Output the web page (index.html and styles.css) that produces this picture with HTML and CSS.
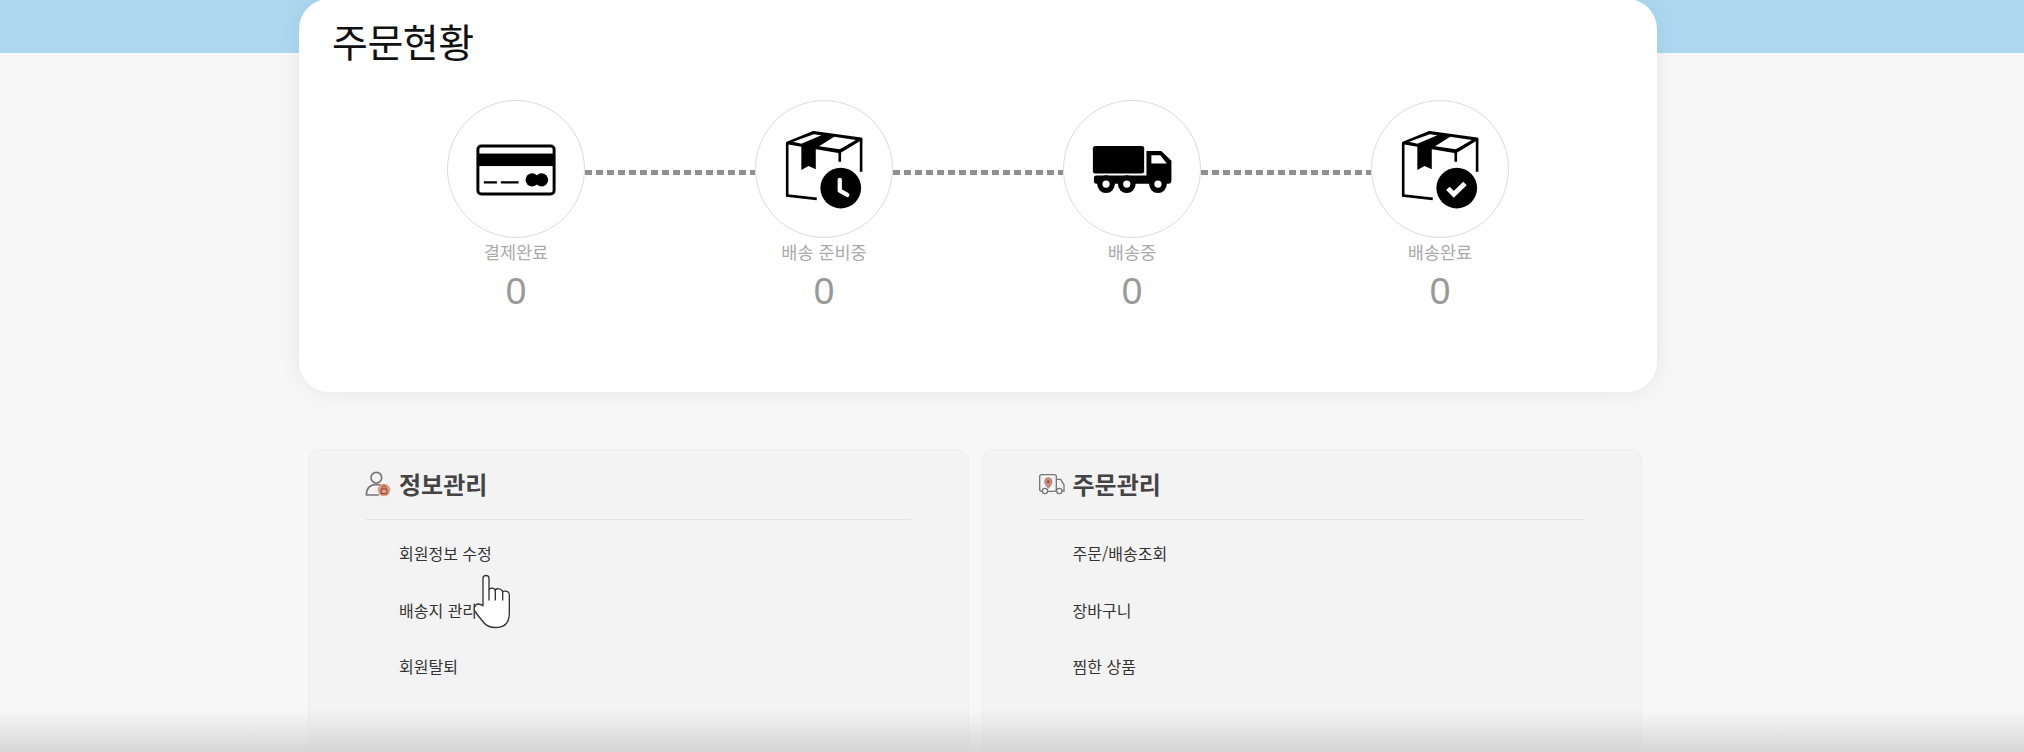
FILE: index.html
```html
<!DOCTYPE html>
<html lang="ko">
<head>
    <meta charset="UTF-8">
    <title>주문현황</title>
    <link rel="stylesheet" href="styles.css">
</head>
<body>

    <div class="top-band"></div>

    <div class="main">
        <!-- Order status -->
        <section class="status-card">
            <h1 class="status-title">주문현황</h1>
            <div class="steps">
                <div class="step">
                    <div class="step-circle">
                        <svg class="step-icon" viewBox="21 30 414 414">
                            <rect x="112" y="167" width="232" height="146" rx="10" fill="#fff" stroke="#000" stroke-width="9"/>
                            <rect x="112" y="190" width="232" height="38" fill="#000"/>
                            <path d="M130 278h40M182 278h54" stroke="#000" stroke-width="7" fill="none"/>
                            <circle cx="277" cy="270" r="20" fill="#000"/>
                            <circle cx="306" cy="270" r="20" fill="#000"/>
                        </svg>
                    </div>
                    <div class="step-label">결제완료</div>
                    <div class="step-count">0</div>
                </div>
                <div class="step-line"></div>
                <div class="step">
                    <div class="step-circle">
                        <svg class="step-icon" viewBox="30 30 414 414">
                            <defs>
                                <g id="box">
                                    <path d="M125 158L205 125L350 145L285 185Z" fill="#000" stroke="#000" stroke-width="8" stroke-linejoin="round"/>
                                    <path d="M143 154L206 131L229 134L168 160Z" fill="#fff"/>
                                    <path d="M222 168L268 139L334 149L285 177Z" fill="#fff"/>
                                    <path d="M125 158V318L215 328M350 145V245M285 185V215" fill="none" stroke="#000" stroke-width="8"/>
                                    <path d="M168 160L212 168V238L190 228L168 240Z" fill="#000"/>
                                </g>
                            </defs>
                            <use href="#box"/>
                            <circle cx="288" cy="295" r="66" fill="#fff"/>
                            <circle cx="288" cy="295" r="62" fill="#000"/>
                            <path d="M285 270V303L308 316" fill="none" stroke="#fff" stroke-width="13" stroke-linecap="round" stroke-linejoin="round"/>
                        </svg>
                    </div>
                    <div class="step-label">배송 준비중</div>
                    <div class="step-count">0</div>
                </div>
                <div class="step-line"></div>
                <div class="step">
                    <div class="step-circle">
                        <svg class="step-icon" viewBox="24 30 414 414">
                            <rect x="112" y="167" width="156" height="84" rx="7" fill="#000"/>
                            <path d="M275 182H320L351 212V272Q351 282 341 282H122Q115 282 115 272V264Q115 257 122 257H275Z" fill="#000"/>
                            <path d="M290 195H317L337 220H290Z" fill="#fff"/>
                            <circle cx="152" cy="283" r="27" fill="#000"/>
                            <circle cx="215" cy="283" r="27" fill="#000"/>
                            <circle cx="310" cy="283" r="27" fill="#000"/>
                            <circle cx="152" cy="283" r="11" fill="#fff"/>
                            <circle cx="215" cy="283" r="11" fill="#fff"/>
                            <circle cx="310" cy="283" r="11" fill="#fff"/>
                        </svg>
                    </div>
                    <div class="step-label">배송중</div>
                    <div class="step-count">0</div>
                </div>
                <div class="step-line"></div>
                <div class="step">
                    <div class="step-circle">
                        <svg class="step-icon" viewBox="30 30 414 414">
                            <use href="#box"/>
                            <circle cx="288" cy="295" r="66" fill="#fff"/>
                            <circle cx="288" cy="295" r="62" fill="#000"/>
                            <path d="M261 296L279 314L313 281" fill="none" stroke="#fff" stroke-width="15"/>
                        </svg>
                    </div>
                    <div class="step-label">배송완료</div>
                    <div class="step-count">0</div>
                </div>
            </div>
        </section>

        <!-- Menus -->
        <div class="panels">
            <section class="panel">
                <div class="panel-head">
                    <svg class="panel-icon" viewBox="28 38 81 81">
                        <circle cx="62" cy="58" r="16" fill="none" stroke="#777" stroke-width="5"/>
                        <path d="M32 110Q32 80 62 78Q70 78 76 82M32 110H68" fill="none" stroke="#777" stroke-width="5" stroke-linecap="round"/>
                        <circle cx="85" cy="95" r="19" fill="#e39a86"/>
                        <rect x="76" y="92" width="18" height="14" rx="2" fill="none" stroke="#8a4a3c" stroke-width="3.5"/>
                        <path d="M80 92V88Q80 82 85 82Q90 82 90 88V92" fill="none" stroke="#8a4a3c" stroke-width="3"/>
                    </svg>
                    <h2 class="panel-title">정보관리</h2>
                </div>
                <ul class="panel-links">
                    <li>회원정보 수정</li>
                    <li>배송지 관리</li>
                    <li>회원탈퇴</li>
                </ul>
                <svg class="hand-cursor" viewBox="95 40 120 170">
                    <path d="M128 130V56Q128 47 137 47Q146 47 146 56V92Q146 85 155 85Q164 85 165 94V90Q167 86 175 87Q186 88 187 97Q190 93 197 94Q207 96 207 106V160Q207 203 165 203Q142 203 130 188Q115 170 102 152Q100 142 106 136Q115 128 128 138Z" fill="#fff" stroke="#333" stroke-width="4" stroke-linejoin="round"/>
                    <path d="M165 94V122M187 97V122M146 92V122" fill="none" stroke="#333" stroke-width="4"/>
                </svg>
            </section>
            <section class="panel">
                <div class="panel-head">
                    <svg class="panel-icon" viewBox="27 30 81 81">
                        <rect x="29" y="41" width="50" height="50" rx="6" fill="none" stroke="#777" stroke-width="4"/>
                        <path d="M79 55H92L102 72V90H96M79 90H80" fill="none" stroke="#777" stroke-width="4"/>
                        <circle cx="45" cy="90" r="8" fill="#f4f4f4" stroke="#777" stroke-width="4"/>
                        <circle cx="88" cy="90" r="8" fill="#f4f4f4" stroke="#777" stroke-width="4"/>
                        <path d="M55 50Q66 50 66 62Q66 70 55 82Q44 70 44 62Q44 50 55 50Z" fill="#d98a7c" stroke="#777" stroke-width="2"/>
                        <circle cx="55" cy="62" r="4" fill="#8a4a3c"/>
                    </svg>
                    <h2 class="panel-title">주문관리</h2>
                </div>
                <ul class="panel-links">
                    <li>주문/배송조회</li>
                    <li>장바구니</li>
                    <li>찜한 상품</li>
                </ul>
            </section>
        </div>
    </div>

    <div class="bottom-shade"></div>

</body>
</html>
```

FILE: styles.css
```css
html, body {
    height: 100%;
    margin: 0;
    overflow: hidden;
}

body {
    position: relative;
    background-color: #f7f7f7;
    font-family: "Noto Sans CJK KR", "Liberation Sans", sans-serif;
}

.top-band {
    height: 53px;
    background-color: #aed8f2;
}

.main {
    width: 1358px;
    margin-left: 299px;
    margin-top: -54px;
}

/* Order status */
.status-card {
    height: 393px;
    box-sizing: border-box;
    padding: 19px 0 0 33px;
    background: #fff;
    border-radius: 30px;
    box-shadow: 0 0 24px rgba(0, 0, 0, 0.07);
}

.status-title {
    margin: 0 0 38px;
    font-size: 39px;
    line-height: 44px;
    font-weight: 400;
    letter-spacing: -0.5px;
    color: #111;
}

.steps {
    display: flex;
    align-items: flex-start;
    width: 1062px;
    margin-left: 115px;
}

.step {
    width: 138px;
    flex-shrink: 0;
    text-align: center;
}

.step-circle {
    width: 138px;
    height: 138px;
    box-sizing: border-box;
    border: 1px solid #dcdcdc;
    border-radius: 50%;
    overflow: hidden;
}

.step-icon {
    display: block;
    width: 136px;
    height: 136px;
}

.step-label {
    margin-top: 2px;
    font-size: 17.5px;
    line-height: 24px;
    color: #aaa;
}

.step-count {
    margin-top: 8px;
    font-family: "Liberation Sans", sans-serif;
    font-size: 37px;
    line-height: 40px;
    color: #999;
}

.step-line {
    flex: 1;
    height: 5px;
    margin-top: 70px;
    background: repeating-linear-gradient(90deg, #8f8f8f 0, #8f8f8f 7px, transparent 7px, transparent 11px);
}

/* Menus */
.panels {
    display: flex;
    gap: 13px;
    width: 1334px;
    margin: 57px 0 0 9px;
}

.panel {
    position: relative;
    flex: 1;
    height: 400px;
    box-sizing: border-box;
    padding: 14px 57px 0;
    background: #f3f3f4;
    border: 1px solid #eeeeee;
    border-radius: 12px;
}

.panel-head {
    display: flex;
    align-items: center;
    gap: 7px;
    height: 40px;
    padding-bottom: 15px;
    border-bottom: 1px solid #e2e2e2;
}

.panel-icon {
    width: 27px;
    height: 27px;
    margin-left: -1px;
}

.panel-title {
    margin: 0;
    font-size: 24px;
    font-weight: 700;
    line-height: 40px;
    color: #444;
}

.panel-links {
    list-style: none;
    margin: 5px 0 0;
    padding: 0 0 0 33px;
}

.panel-links li {
    height: 56.5px;
    line-height: 56.5px;
    font-size: 16px;
    color: #333;
}

.hand-cursor {
    position: absolute;
    left: 163px;
    top: 123px;
    width: 40px;
    height: 57px;
}

.bottom-shade {
    position: absolute;
    left: 0;
    right: 0;
    bottom: 0;
    height: 42px;
    background: linear-gradient(rgba(200, 200, 200, 0), rgba(200, 200, 200, 0.7));
}
```
